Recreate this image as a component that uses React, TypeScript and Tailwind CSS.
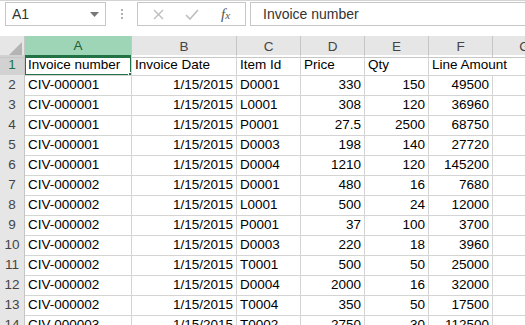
import React from "react";

const rows: string[][] = [
  ["Invoice number", "Invoice Date", "Item Id", "Price", "Qty", "Line Amount"],
  ["CIV-000001", "1/15/2015", "D0001", "330", "150", "49500"],
  ["CIV-000001", "1/15/2015", "L0001", "308", "120", "36960"],
  ["CIV-000001", "1/15/2015", "P0001", "27.5", "2500", "68750"],
  ["CIV-000001", "1/15/2015", "D0003", "198", "140", "27720"],
  ["CIV-000001", "1/15/2015", "D0004", "1210", "120", "145200"],
  ["CIV-000002", "1/15/2015", "D0001", "480", "16", "7680"],
  ["CIV-000002", "1/15/2015", "L0001", "500", "24", "12000"],
  ["CIV-000002", "1/15/2015", "P0001", "37", "100", "3700"],
  ["CIV-000002", "1/15/2015", "D0003", "220", "18", "3960"],
  ["CIV-000002", "1/15/2015", "T0001", "500", "50", "25000"],
  ["CIV-000002", "1/15/2015", "D0004", "2000", "16", "32000"],
  ["CIV-000002", "1/15/2015", "T0004", "350", "50", "17500"],
  ["CIV-000003", "1/15/2015", "T0002", "2750", "30", "112500"],
];

const cols = ["A", "B", "C", "D", "E", "F", "G"];
const gridCols = "grid grid-cols-[25px_107px_105px_64px_64px_64px_64px_64px] w-[557px]";

export default function App() {
  return (
    <div
      className="w-[525px] h-[325px] overflow-hidden bg-white relative"
      style={{ fontFamily: '"Liberation Sans", Arial, sans-serif' }}
    >
      {/* toolbar */}
      <div className="h-[36px] flex items-start pt-[1px] border-t border-[#d4d4d4]">
        <div className="ml-[5px] w-[101px] h-[24px] border border-[#c6c6c6] flex items-center justify-between pl-[6px] pr-[6px]">
          <span className="text-[14px] text-[#333]">A1</span>
          <svg width="9" height="5" viewBox="0 0 9 5"><path d="M0 0h9L4.5 5z" fill="#777" /></svg>
        </div>
        <div className="w-[31px] h-[24px] flex flex-col items-center justify-center gap-[2px]">
          <div className="w-[2px] h-[2px] bg-[#b0b0b0]" />
          <div className="w-[2px] h-[2px] bg-[#b0b0b0]" />
          <div className="w-[2px] h-[2px] bg-[#b0b0b0]" />
        </div>
        <div className="w-[109px] h-[24px] border border-[#c6c6c6] flex items-center justify-around px-[4px]">
          <svg width="11" height="11" viewBox="0 0 11 11"><path d="M1 1l9 9M10 1l-9 9" stroke="#bdbdbd" strokeWidth="1.4" /></svg>
          <svg width="14" height="11" viewBox="0 0 14 11"><path d="M1 6l4 4 8-9" stroke="#bdbdbd" strokeWidth="1.6" fill="none" /></svg>
          <span className="text-[15px] italic text-[#555]" style={{ fontFamily: '"Liberation Serif", serif' }}>f<span className="text-[11px]">x</span></span>
        </div>
        <div className="ml-[4px] flex-1 h-[24px] border border-r-0 border-[#c6c6c6] flex items-center pl-[12px]">
          <span className="text-[14px] text-[#333]">Invoice number</span>
        </div>
      </div>

      {/* column headers */}
      <div className={`${gridCols} h-[19px] bg-[#e6e6e6]`}>
        <div className="relative border-r border-b border-[#c6c6c6]">
          <svg className="absolute right-[2px] bottom-[2px]" width="13" height="13" viewBox="0 0 13 13"><path d="M13 0V13H0z" fill="#b4b4b4" /></svg>
        </div>
        {cols.map((c) => (
          <div
            key={c}
            className={
              c === "A"
                ? "bg-[#9fd5b7] border-r border-[#c6c6c6] border-b-2 border-b-[#217346] flex items-center justify-center text-[13.5px] text-[#1f5c38]"
                : "border-r border-b border-[#c6c6c6] flex items-center justify-center text-[13.5px] text-[#444]"
            }
          >
            {c}
          </div>
        ))}
      </div>

      {/* rows */}
      {rows.map((r, i) => (
        <div key={i} className={`${gridCols} h-[20px]`}>
          <div
            className={
              i === 0
                ? "bg-[#d2d2d2] border-r border-b border-[#c6c6c6] flex items-center justify-center text-[13.5px] text-[#217346]"
                : "bg-[#e6e6e6] border-r border-b border-[#c6c6c6] flex items-center justify-center text-[13.5px] text-[#444]"
            }
          >
            {i + 1}
          </div>
          {r.map((v, j) => {
            const num = i > 0 && j > 0 && j !== 2;
            const overflowCell = i === 0 && j === 5;
            return (
              <div
                key={j}
                className={`relative border-b border-[#d4d4d4] flex items-center px-[3px] text-[13.5px] text-black whitespace-nowrap ${
                  num ? "justify-end" : "justify-start"
                } ${overflowCell ? "overflow-visible z-10" : "overflow-hidden border-r"}`}
              >
                {v}
                {i === 0 && j === 0 && (
                  <>
                    <div className="absolute left-[-1px] top-[-1px] right-[-1px] bottom-[-1px] border-2 border-[#217346] pointer-events-none" />
                    <div className="absolute right-[-4px] bottom-[-4px] w-[7px] h-[7px] bg-[#217346] border border-white" />
                  </>
                )}
              </div>
            );
          })}
          <div className="border-b border-r border-[#d4d4d4]" />
          <div className="border-b border-[#d4d4d4]" />
        </div>
      ))}
    </div>
  );
}
